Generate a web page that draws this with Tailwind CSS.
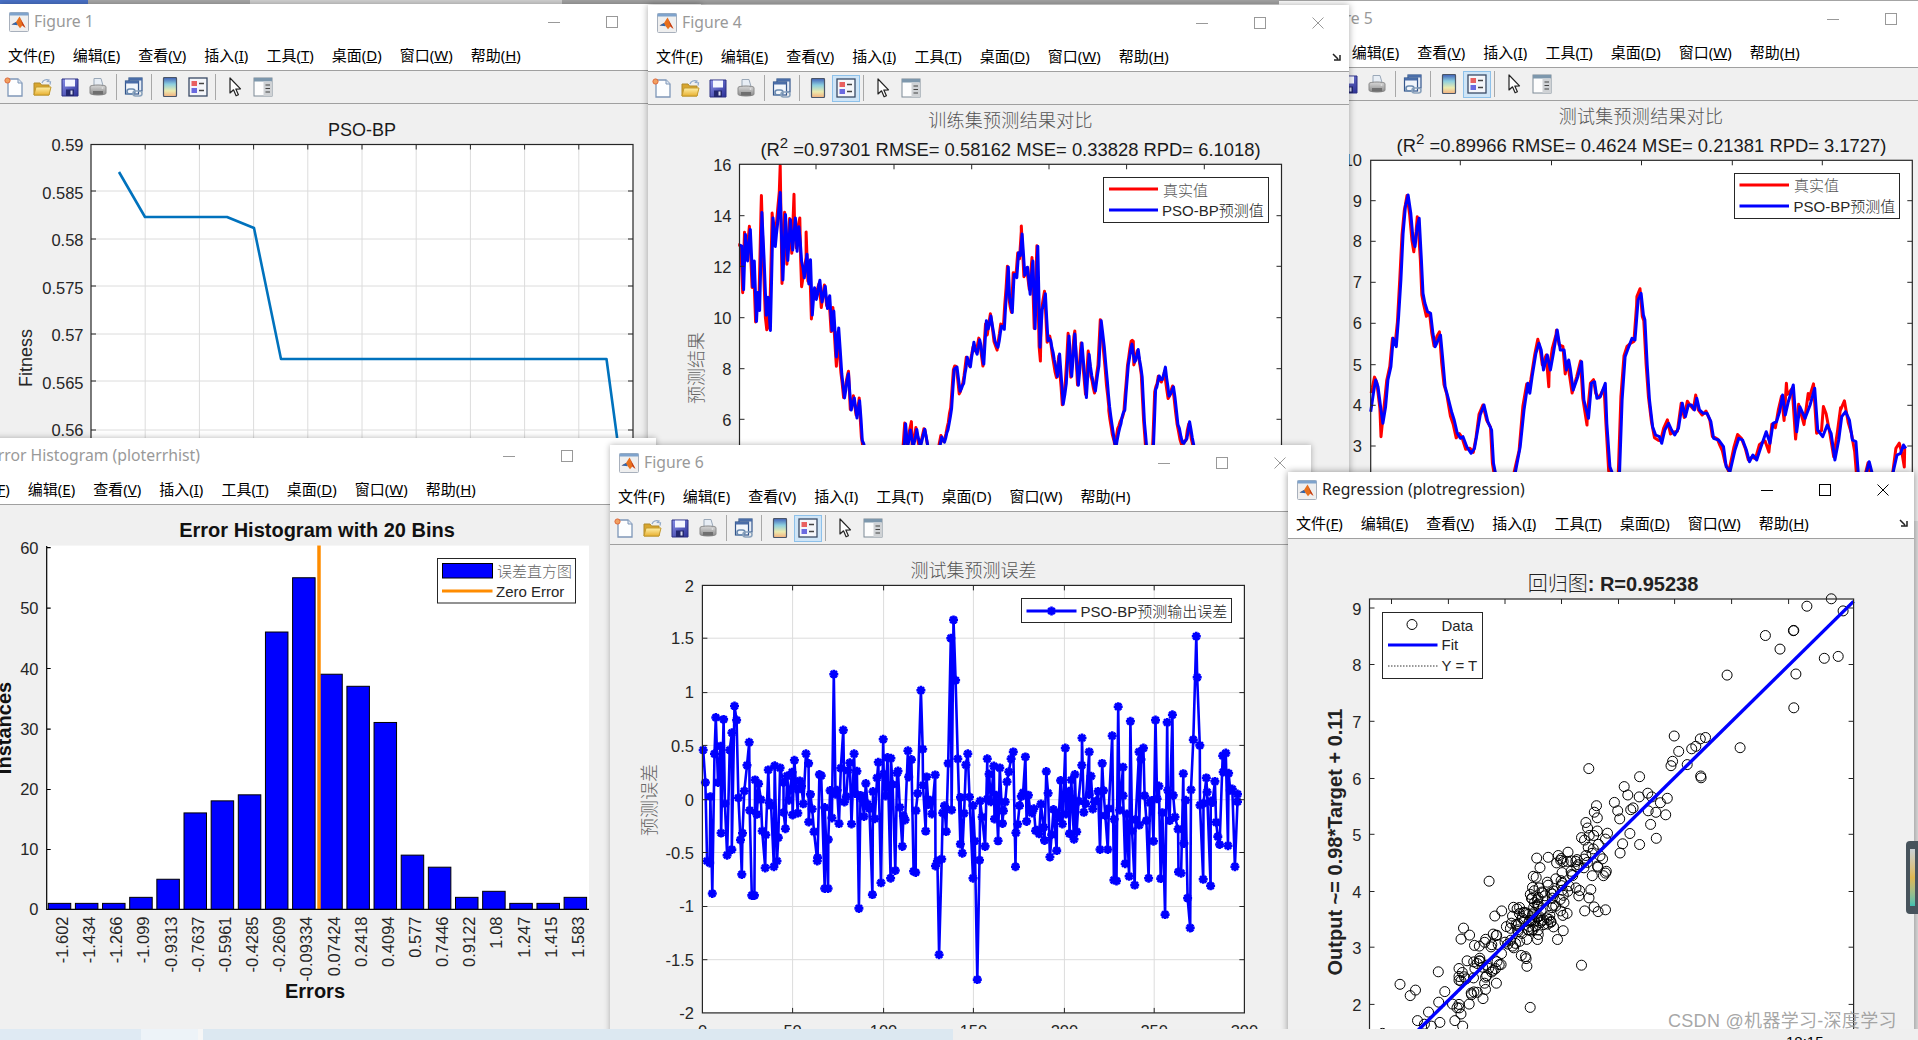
<!DOCTYPE html>
<html lang="zh">
<head>
<meta charset="utf-8">
<title>MATLAB figures</title>
<script src="https://cdn.jsdelivr.net/npm/@tailwindcss/browser@4"></script>
</head>
<body class="relative w-[1918px] h-[1040px] overflow-hidden bg-[#dcdcdc] font-['Noto_Sans','Noto_Sans_CJK_SC',sans-serif]">

<svg class="absolute w-0 h-0" aria-hidden="true">
  <defs>
    <linearGradient id="cb" x1="0" y1="0" x2="0" y2="1"><stop offset="0" stop-color="#3f5fb5"/><stop offset=".35" stop-color="#8ccfe0"/><stop offset=".7" stop-color="#ecebae"/><stop offset="1" stop-color="#f2b080"/></linearGradient>
    <linearGradient id="fo" x1="0" y1="0" x2="0" y2="1"><stop offset="0" stop-color="#fff0a8"/><stop offset="1" stop-color="#e8b030"/></linearGradient>
    <linearGradient id="fl" x1="0" y1="0" x2="1" y2="1"><stop offset="0" stop-color="#8a90e8"/><stop offset="1" stop-color="#2a2f96"/></linearGradient>
    <linearGradient id="pr" x1="0" y1="0" x2="0" y2="1"><stop offset="0" stop-color="#d8d8d8"/><stop offset="1" stop-color="#8a8a8a"/></linearGradient>
  </defs>
  <symbol id="ml" viewBox="0 0 20 20"><rect x=".5" y=".5" width="19" height="19" rx="1" fill="#efefef" stroke="#a8b0bc"/><rect x=".5" y=".5" width="19" height="3" fill="#7fa3cc"/><path d="M2.5 12.5 7 10l3.5-5.5 2.5 5 3.5 6-3-2.2-2.5 3-2.8-3.8z" fill="#e8701c"/><path d="M2.5 12.5 7 10l1.6 3.3-1.8-.2z" fill="#2c66b0"/><path d="m10.5 4.500 6 11.500-3-2.200-1.300-5.300z" fill="#c43c16"/></symbol>
  <symbol id="new" viewBox="0 0 20 20"><path d="M4 2h10l4 4v13H4z" fill="#fdfeff" stroke="#7f97b8" stroke-width="1.300"/><path d="M14 2v4h4" fill="#dfe8f3" stroke="#7f97b8"/><circle cx="3.500" cy="3.500" r="2.600" fill="#f0a060" stroke="#e06a3c"/></symbol>
  <symbol id="open" viewBox="0 0 20 20"><path d="M2 6h6l1.500 2H17v10H2z" fill="#d9a62e" stroke="#b08a2a"/><path d="M2 18 4 10h15l-2 8z" fill="url(#fo)" stroke="#c49a2c"/><path d="M10 6c1-3 4-4 7-3l-1.500 1.500 3 .2-.5 3" fill="none" stroke="#8fa8c8" stroke-width="1.200"/></symbol>
  <symbol id="save" viewBox="0 0 20 20"><path d="M2 2h16v17H2z" fill="url(#fl)" stroke="#2c3183"/><rect x="5" y="2.500" width="10" height="7" fill="#f4f6ff"/><rect x="6" y="12.500" width="8" height="6.500" fill="#23276e"/><rect x="10.500" y="13.500" width="2" height="4" fill="#d8dcf0"/></symbol>
  <symbol id="print" viewBox="0 0 20 20"><path d="M6 1.500h7l2 7H6z" fill="#e8eef5" stroke="#9aa8b8"/><path d="M2 9.500c1-2 15-2 16 0v7c-2 2-14 2-16 0z" fill="url(#pr)" stroke="#8a8a8a"/><rect x="5" y="14" width="10" height="3.500" fill="#6f6f6f"/><circle cx="14.500" cy="11" r=".9" fill="#ddd"/></symbol>
  <symbol id="link" viewBox="0 0 20 20"><rect x="5" y="1" width="13" height="13" fill="#e5ecf5" stroke="#33568c" stroke-width="1.200"/><rect x="5" y="1" width="13" height="2.500" fill="#4a6da8"/><rect x="1.500" y="4" width="13" height="13" fill="#f2f6fb" stroke="#33568c" stroke-width="1.200"/><rect x="1.500" y="4" width="13" height="2.500" fill="#4a6da8"/><rect x="3" y="12" width="8" height="5" rx="2.500" fill="none" stroke="#6a8ab0" stroke-width="1.600"/><rect x="9" y="14" width="9" height="5" rx="2.500" fill="none" stroke="#8aa2bc" stroke-width="1.600"/></symbol>
  <symbol id="cbar" viewBox="0 0 20 20"><rect x="3.500" y=".5" width="13" height="19" rx="1" fill="url(#cb)" stroke="#4a5568" stroke-width="1.200"/></symbol>
  <symbol id="leg" viewBox="0 0 20 20"><rect x="1" y="1" width="18" height="18" fill="#f4f6fa" stroke="#3a4a66" stroke-width="1.300"/><rect x="3.500" y="4" width="5.500" height="5" fill="#e86060"/><rect x="3.500" y="11" width="5.500" height="5" fill="#6a6ae0"/><path d="M11 6.500h5M11 13.500h5" stroke="#444" stroke-width="1.300"/></symbol>
  <symbol id="cur" viewBox="0 0 20 20"><path d="M5 1v15l3.500-3.200 2.600 6 2.300-1-2.600-5.700 4.700-.3z" fill="#fff" stroke="#222" stroke-width="1.200" stroke-linejoin="round"/></symbol>
  <symbol id="pan" viewBox="0 0 20 20"><rect x="1" y="1" width="18" height="18" fill="#fdfdfd" stroke="#7d8a96"/><rect x="1" y="1" width="18" height="3.500" fill="#7d97ac"/><rect x="10.500" y="4.500" width="8.500" height="14.500" fill="#cfd2d5"/><path d="M12.500 8h4.500M12.500 11.500h4.500M12.500 15h4.500" stroke="#444" stroke-width="1.200"/></symbol>
</svg>

<!-- desktop strip at the top -->
<div class="absolute left-0 top-0 w-full h-[4px] flex">
  <div class="w-[88px] bg-[#4a72c8]"></div><div class="w-[162px] bg-[#a9a9a9]"></div><div class="w-[312px] bg-[#d2d2d2]"></div><div class="flex-1 bg-[#a4a4a4]"></div>
</div>

<!-- Figure 5 -->
<section class="absolute left-[1279px] top-[1px] w-[701px] h-[520px] z-[1] bg-[#f0f0f0] overflow-hidden">
  <header class="h-[36px] bg-white flex items-center pl-[9px] pr-[2px]"><svg class="w-5 h-5"><use href="#ml"/></svg><span class="ml-[5px] text-[15.75px] text-[#999999]">Figure 5</span><span class="flex-1"></span><span class="w-[58px] flex justify-center"><span class="w-3 h-px bg-[#999999]"></span></span><span class="w-[58px] flex justify-center"><span class="w-3 h-3 border border-[#999999]"></span></span><span class="w-[58px]"></span></header>
  <nav class="h-[31px] bg-white border-b border-[#a0a0a0] pl-[8px] flex items-center gap-[18px] text-[15px] text-black whitespace-nowrap"><span>文件(<span class="underline">F</span>)</span><span>编辑(<span class="underline">E</span>)</span><span>查看(<span class="underline">V</span>)</span><span>插入(<span class="underline">I</span>)</span><span>工具(<span class="underline">T</span>)</span><span>桌面(<span class="underline">D</span>)</span><span>窗口(<span class="underline">W</span>)</span><span>帮助(<span class="underline">H</span>)</span></nav>
  <div class="h-[33px] border-b border-[#a0a0a0] flex items-center"><span class="w-7 flex justify-center"><svg class="w-5 h-5"><use href="#new"/></svg></span><span class="w-7 flex justify-center"><svg class="w-5 h-5"><use href="#open"/></svg></span><span class="w-7 flex justify-center"><svg class="w-5 h-5"><use href="#save"/></svg></span><span class="w-7 flex justify-center"><svg class="w-5 h-5"><use href="#print"/></svg></span><span class="w-px h-[26px] bg-[#a8a8a8] ml-[4px] mr-[3px]"></span><span class="w-7 flex justify-center"><svg class="w-5 h-5"><use href="#link"/></svg></span><span class="w-px h-[26px] bg-[#a8a8a8] ml-[3px] mr-[4px]"></span><span class="w-7 flex justify-center"><svg class="w-5 h-5"><use href="#cbar"/></svg></span><span class="w-7 h-[27px] flex items-center justify-center bg-[#cfe5f7] border border-[#8ec1ea]"><svg class="w-5 h-5"><use href="#leg"/></svg></span><span class="w-px h-[26px] bg-[#a8a8a8] ml-[3px] mr-[5px]"></span><span class="w-7 flex justify-center"><svg class="w-5 h-5"><use href="#cur"/></svg></span><span class="w-7 flex justify-center"><svg class="w-5 h-5"><use href="#pan"/></svg></span></div>
  <svg class="block w-[701px] h-[420px] font-['Liberation_Sans','Noto_Sans_CJK_SC',sans-serif] fill-[#262626]" viewBox="1279 101 701 420" font-size="16.500">
    <g id="g5"></g>
    <text x="1641" y="123" font-size="18" font-weight="300" letter-spacing=".3" text-anchor="middle" class="fill-[#555555]">测试集预测结果对比</text>
    <text x="1641.500" y="152" font-size="18.400" text-anchor="middle" class="fill-[#1a1a1a]">(R<tspan font-size="15" dy="-8">2</tspan><tspan dy="8"> =0.89966 RMSE= 0.4624 MSE= 0.21381 RPD= 3.1727)</tspan></text>
    <g text-anchor="end"><text x="1362" y="166">10</text><text x="1362" y="207">9</text><text x="1362" y="247">8</text><text x="1362" y="288">7</text><text x="1362" y="329">6</text><text x="1362" y="371">5</text><text x="1362" y="411">4</text><text x="1362" y="452">3</text></g>
    <rect x="1734.500" y="173.500" width="165" height="45" fill="#fff" stroke="#262626"/>
    <path d="M1739.500 185h49.500" stroke="#f00" stroke-width="3"/><path d="M1739.500 206h49.500" stroke="#00f" stroke-width="3"/>
    <text x="1794" y="191" font-size="15" font-weight="300" class="fill-[#555555]">真实值</text><text x="1793.500" y="212" font-size="15">PSO-BP<tspan font-weight="300">预测值</tspan></text>
  </svg>
</section>

<!-- Figure 1 -->
<section class="absolute left-0 top-[4px] w-[701px] h-[560px] z-[2] bg-[#f0f0f0] overflow-hidden shadow-[0_0_6px_rgba(0,0,0,0.3)]">
  <header class="h-[36px] bg-white flex items-center pl-[9px] pr-[2px]"><svg class="w-5 h-5"><use href="#ml"/></svg><span class="ml-[5px] text-[15.75px] text-[#999999]">Figure 1</span><span class="flex-1"></span><span class="w-[58px] flex justify-center"><span class="w-3 h-px bg-[#999999]"></span></span><span class="w-[58px] flex justify-center"><span class="w-3 h-3 border border-[#999999]"></span></span><span class="w-[58px]"></span></header>
  <nav class="h-[31px] bg-white border-b border-[#a0a0a0] pl-[8px] flex items-center gap-[18px] text-[15px] text-black whitespace-nowrap"><span>文件(<span class="underline">F</span>)</span><span>编辑(<span class="underline">E</span>)</span><span>查看(<span class="underline">V</span>)</span><span>插入(<span class="underline">I</span>)</span><span>工具(<span class="underline">T</span>)</span><span>桌面(<span class="underline">D</span>)</span><span>窗口(<span class="underline">W</span>)</span><span>帮助(<span class="underline">H</span>)</span></nav>
  <div class="h-[33px] border-b border-[#a0a0a0] flex items-center"><span class="w-7 flex justify-center"><svg class="w-5 h-5"><use href="#new"/></svg></span><span class="w-7 flex justify-center"><svg class="w-5 h-5"><use href="#open"/></svg></span><span class="w-7 flex justify-center"><svg class="w-5 h-5"><use href="#save"/></svg></span><span class="w-7 flex justify-center"><svg class="w-5 h-5"><use href="#print"/></svg></span><span class="w-px h-[26px] bg-[#a8a8a8] ml-[4px] mr-[3px]"></span><span class="w-7 flex justify-center"><svg class="w-5 h-5"><use href="#link"/></svg></span><span class="w-px h-[26px] bg-[#a8a8a8] ml-[3px] mr-[4px]"></span><span class="w-7 flex justify-center"><svg class="w-5 h-5"><use href="#cbar"/></svg></span><span class="w-7 flex justify-center"><svg class="w-5 h-5"><use href="#leg"/></svg></span><span class="w-px h-[26px] bg-[#a8a8a8] ml-[3px] mr-[5px]"></span><span class="w-7 flex justify-center"><svg class="w-5 h-5"><use href="#cur"/></svg></span><span class="w-7 flex justify-center"><svg class="w-5 h-5"><use href="#pan"/></svg></span></div>
  <svg class="block w-[701px] h-[460px] font-['Liberation_Sans','Noto_Sans_CJK_SC',sans-serif] fill-[#262626]" viewBox="0 104 701 460" font-size="16.500">
    <g id="g1"></g>
    <text x="362" y="136" font-size="18" text-anchor="middle" class="fill-[#1a1a1a]">PSO-BP</text>
    <g text-anchor="end"><text x="83.500" y="151">0.59</text><text x="83.500" y="199">0.585</text><text x="83.500" y="246">0.58</text><text x="83.500" y="294">0.575</text><text x="83.500" y="341">0.57</text><text x="83.500" y="389">0.565</text><text x="83.500" y="436">0.56</text></g>
    <text transform="translate(32,358) rotate(-90)" font-size="18" text-anchor="middle">Fitness</text>
  </svg>
</section>

<!-- Figure 4 -->
<section class="absolute left-[648px] top-[5px] w-[701px] h-[480px] z-[3] bg-[#f0f0f0] overflow-hidden shadow-[0_0_7px_rgba(0,0,0,0.35)]">
  <header class="h-[36px] bg-white flex items-center pl-[9px] pr-[2px]"><svg class="w-5 h-5"><use href="#ml"/></svg><span class="ml-[5px] text-[15.75px] text-[#999999]">Figure 4</span><span class="flex-1"></span><span class="w-[58px] flex justify-center"><span class="w-3 h-px bg-[#999999]"></span></span><span class="w-[58px] flex justify-center"><span class="w-3 h-3 border border-[#999999]"></span></span><span class="w-[58px] flex justify-center"><svg class="w-3 h-3" viewBox="0 0 12 12"><path d="M.5.5l11 11M11.500.5l-11 11" stroke="#999999" fill="none"/></svg></span></header>
  <nav class="relative h-[31px] bg-white border-b border-[#a0a0a0] pl-[8px] flex items-center gap-[18px] text-[15px] text-black whitespace-nowrap"><span>文件(<span class="underline">F</span>)</span><span>编辑(<span class="underline">E</span>)</span><span>查看(<span class="underline">V</span>)</span><span>插入(<span class="underline">I</span>)</span><span>工具(<span class="underline">T</span>)</span><span>桌面(<span class="underline">D</span>)</span><span>窗口(<span class="underline">W</span>)</span><span>帮助(<span class="underline">H</span>)</span><svg class="absolute right-[8px] top-[12px] w-[9px] h-[8px]" viewBox="0 0 9 8"><path d="M1 1l5 5M2 7h6V2" stroke="#222" stroke-width="1.500" fill="none"/></svg></nav>
  <div class="h-[33px] border-b border-[#a0a0a0] flex items-center"><span class="w-7 flex justify-center"><svg class="w-5 h-5"><use href="#new"/></svg></span><span class="w-7 flex justify-center"><svg class="w-5 h-5"><use href="#open"/></svg></span><span class="w-7 flex justify-center"><svg class="w-5 h-5"><use href="#save"/></svg></span><span class="w-7 flex justify-center"><svg class="w-5 h-5"><use href="#print"/></svg></span><span class="w-px h-[26px] bg-[#a8a8a8] ml-[4px] mr-[3px]"></span><span class="w-7 flex justify-center"><svg class="w-5 h-5"><use href="#link"/></svg></span><span class="w-px h-[26px] bg-[#a8a8a8] ml-[3px] mr-[4px]"></span><span class="w-7 flex justify-center"><svg class="w-5 h-5"><use href="#cbar"/></svg></span><span class="w-7 h-[27px] flex items-center justify-center bg-[#cfe5f7] border border-[#8ec1ea]"><svg class="w-5 h-5"><use href="#leg"/></svg></span><span class="w-px h-[26px] bg-[#a8a8a8] ml-[3px] mr-[5px]"></span><span class="w-7 flex justify-center"><svg class="w-5 h-5"><use href="#cur"/></svg></span><span class="w-7 flex justify-center"><svg class="w-5 h-5"><use href="#pan"/></svg></span></div>
  <svg class="block w-[701px] h-[380px] font-['Liberation_Sans','Noto_Sans_CJK_SC',sans-serif] fill-[#262626]" viewBox="648 105 701 380" font-size="16.500">
    <g id="g4"></g>
    <text x="1010.500" y="127" font-size="18" font-weight="300" letter-spacing=".3" text-anchor="middle" class="fill-[#555555]">训练集预测结果对比</text>
    <text x="1010.500" y="156" font-size="18.400" text-anchor="middle" class="fill-[#1a1a1a]">(R<tspan font-size="15" dy="-8">2</tspan><tspan dy="8"> =0.97301 RMSE= 0.58162 MSE= 0.33828 RPD= 6.1018)</tspan></text>
    <g text-anchor="end"><text x="731.500" y="171">16</text><text x="731.500" y="222">14</text><text x="731.500" y="273">12</text><text x="731.500" y="324">10</text><text x="731.500" y="375">8</text><text x="731.500" y="426">6</text></g>
    <text transform="translate(703,368) rotate(-90)" font-size="18" font-weight="300" text-anchor="middle" class="fill-[#666666]">预测结果</text>
    <rect x="1103.500" y="177.500" width="165" height="45" fill="#fff" stroke="#262626"/>
    <path d="M1109 189h49" stroke="#f00" stroke-width="3"/><path d="M1109 210h49" stroke="#00f" stroke-width="3"/>
    <text x="1163" y="196" font-size="15" font-weight="300" class="fill-[#555555]">真实值</text><text x="1162" y="216" font-size="15">PSO-BP<tspan font-weight="300">预测值</tspan></text>
  </svg>
</section>

<!-- Error Histogram -->
<section class="absolute left-[-45px] top-[438px] w-[701px] h-[602px] z-[4] bg-[#f0f0f0] overflow-hidden shadow-[0_0_6px_rgba(0,0,0,0.3)]">
  <header class="h-[36px] bg-white flex items-center pl-[9px] pr-[2px]"><svg class="w-5 h-5"><use href="#ml"/></svg><span class="ml-[5px] text-[15.75px] text-[#999999]">Error Histogram (ploterrhist)</span><span class="flex-1"></span><span class="w-[58px] flex justify-center"><span class="w-3 h-px bg-[#999999]"></span></span><span class="w-[58px] flex justify-center"><span class="w-3 h-3 border border-[#999999]"></span></span><span class="w-[58px]"></span></header>
  <nav class="h-[31px] bg-white border-b border-[#a0a0a0] pl-[8px] flex items-center gap-[18px] text-[15px] text-black whitespace-nowrap"><span>文件(<span class="underline">F</span>)</span><span>编辑(<span class="underline">E</span>)</span><span>查看(<span class="underline">V</span>)</span><span>插入(<span class="underline">I</span>)</span><span>工具(<span class="underline">T</span>)</span><span>桌面(<span class="underline">D</span>)</span><span>窗口(<span class="underline">W</span>)</span><span>帮助(<span class="underline">H</span>)</span></nav>
  <svg class="block w-[701px] h-[535px] font-['Liberation_Sans','Noto_Sans_CJK_SC',sans-serif] fill-[#262626]" viewBox="-45 505 701 535" font-size="16.500">
    <g id="gh"></g>
    <text x="317" y="537" font-size="20" font-weight="700" text-anchor="middle" class="fill-[#111111]">Error Histogram with 20 Bins</text>
    <g text-anchor="end"><text x="38.500" y="915">0</text><text x="38.500" y="855">10</text><text x="38.500" y="795">20</text><text x="38.500" y="735">30</text><text x="38.500" y="675">40</text><text x="38.500" y="614">50</text><text x="38.500" y="554">60</text></g>
    <g text-anchor="end">
      <text transform="translate(68,916.500) rotate(-90)">-1.602</text><text transform="translate(95.150,916.500) rotate(-90)">-1.434</text><text transform="translate(122.300,916.500) rotate(-90)">-1.266</text><text transform="translate(149.450,916.500) rotate(-90)">-1.099</text><text transform="translate(176.600,916.500) rotate(-90)">-0.9313</text><text transform="translate(203.750,916.500) rotate(-90)">-0.7637</text><text transform="translate(230.900,916.500) rotate(-90)">-0.5961</text><text transform="translate(258.050,916.500) rotate(-90)">-0.4285</text><text transform="translate(285.200,916.500) rotate(-90)">-0.2609</text><text transform="translate(312.350,916.500) rotate(-90)">-0.09334</text><text transform="translate(339.500,916.500) rotate(-90)">0.07424</text><text transform="translate(366.650,916.500) rotate(-90)">0.2418</text><text transform="translate(393.800,916.500) rotate(-90)">0.4094</text><text transform="translate(420.950,916.500) rotate(-90)">0.577</text><text transform="translate(448.100,916.500) rotate(-90)">0.7446</text><text transform="translate(475.250,916.500) rotate(-90)">0.9122</text><text transform="translate(502.400,916.500) rotate(-90)">1.08</text><text transform="translate(529.550,916.500) rotate(-90)">1.247</text><text transform="translate(556.700,916.500) rotate(-90)">1.415</text><text transform="translate(583.850,916.500) rotate(-90)">1.583</text>
    </g>
    <text x="315" y="998" font-size="20" font-weight="700" text-anchor="middle" class="fill-[#111111]">Errors</text>
    <text transform="translate(10.500,728) rotate(-90)" font-size="20" font-weight="700" text-anchor="middle" class="fill-[#111111]">Instances</text>
    <rect x="437.500" y="558.500" width="138" height="44.500" fill="#fff" stroke="#262626"/>
    <rect x="442.500" y="563.500" width="50" height="14.500" fill="#00f" stroke="#000"/>
    <path d="M442 591h50.500" stroke="#ff8c00" stroke-width="3"/>
    <text x="497" y="577" font-size="15" font-weight="300" class="fill-[#666666]">误差直方图</text><text x="496" y="597" font-size="15">Zero Error</text>
  </svg>
</section>

<!-- Figure 6 -->
<section class="absolute left-[610px] top-[445px] w-[701px] h-[595px] z-[5] bg-[#f0f0f0] overflow-hidden shadow-[0_0_6px_rgba(0,0,0,0.3)]">
  <header class="h-[36px] bg-white flex items-center pl-[9px] pr-[2px]"><svg class="w-5 h-5"><use href="#ml"/></svg><span class="ml-[5px] text-[15.75px] text-[#999999]">Figure 6</span><span class="flex-1"></span><span class="w-[58px] flex justify-center"><span class="w-3 h-px bg-[#999999]"></span></span><span class="w-[58px] flex justify-center"><span class="w-3 h-3 border border-[#999999]"></span></span><span class="w-[58px] flex justify-center"><svg class="w-3 h-3" viewBox="0 0 12 12"><path d="M.5.5l11 11M11.500.5l-11 11" stroke="#999999" fill="none"/></svg></span></header>
  <nav class="h-[31px] bg-white border-b border-[#a0a0a0] pl-[8px] flex items-center gap-[18px] text-[15px] text-black whitespace-nowrap"><span>文件(F)</span><span>编辑(E)</span><span>查看(V)</span><span>插入(I)</span><span>工具(T)</span><span>桌面(D)</span><span>窗口(W)</span><span>帮助(H)</span></nav>
  <div class="h-[33px] border-b border-[#a0a0a0] flex items-center"><span class="w-7 flex justify-center"><svg class="w-5 h-5"><use href="#new"/></svg></span><span class="w-7 flex justify-center"><svg class="w-5 h-5"><use href="#open"/></svg></span><span class="w-7 flex justify-center"><svg class="w-5 h-5"><use href="#save"/></svg></span><span class="w-7 flex justify-center"><svg class="w-5 h-5"><use href="#print"/></svg></span><span class="w-px h-[26px] bg-[#a8a8a8] ml-[4px] mr-[3px]"></span><span class="w-7 flex justify-center"><svg class="w-5 h-5"><use href="#link"/></svg></span><span class="w-px h-[26px] bg-[#a8a8a8] ml-[3px] mr-[4px]"></span><span class="w-7 flex justify-center"><svg class="w-5 h-5"><use href="#cbar"/></svg></span><span class="w-7 h-[27px] flex items-center justify-center bg-[#cfe5f7] border border-[#8ec1ea]"><svg class="w-5 h-5"><use href="#leg"/></svg></span><span class="w-px h-[26px] bg-[#a8a8a8] ml-[3px] mr-[5px]"></span><span class="w-7 flex justify-center"><svg class="w-5 h-5"><use href="#cur"/></svg></span><span class="w-7 flex justify-center"><svg class="w-5 h-5"><use href="#pan"/></svg></span></div>
  <svg class="block w-[701px] h-[495px] font-['Liberation_Sans','Noto_Sans_CJK_SC',sans-serif] fill-[#262626]" viewBox="610 545 701 495" font-size="16.500">
    <g id="g6"></g>
    <text x="973.500" y="577" font-size="18" font-weight="300" text-anchor="middle" class="fill-[#555555]">测试集预测误差</text>
    <g text-anchor="end"><text x="694" y="592">2</text><text x="694" y="644">1.5</text><text x="694" y="698">1</text><text x="694" y="752">0.5</text><text x="694" y="806">0</text><text x="694" y="859">-0.5</text><text x="694" y="912">-1</text><text x="694" y="966">-1.5</text><text x="694" y="1019">-2</text></g>
    <g text-anchor="middle"><text x="702.500" y="1037">0</text><text x="792.600" y="1037">50</text><text x="883.500" y="1037">100</text><text x="973.400" y="1037">150</text><text x="1064.400" y="1037">200</text><text x="1154.200" y="1037">250</text><text x="1244.400" y="1037">300</text></g>
    <text transform="translate(656,800) rotate(-90)" font-size="18" font-weight="300" text-anchor="middle" class="fill-[#666666]">预测误差</text>
    <rect x="1021.500" y="598.500" width="210" height="24" fill="#fff" stroke="#262626"/>
    <path d="M1026.500 611h50" stroke="#00f" stroke-width="3"/><path d="M1051.500 606.500v9M1047 611h9M1048.300 607.800l6.400 6.400M1054.700 607.800l-6.400 6.400" stroke="#00f" stroke-width="2.600"/>
    <text x="1080.500" y="617" font-size="15">PSO-BP<tspan font-weight="300">预测输出误差</tspan></text>
  </svg>
</section>

<!-- Regression -->
<section class="absolute left-[1288px] top-[472px] w-[626px] h-[568px] z-[6] bg-[#f0f0f0] overflow-hidden shadow-[0_0_7px_rgba(0,0,0,0.4)]">
  <header class="h-[36px] bg-white flex items-center pl-[9px] pr-[2px]"><svg class="w-5 h-5"><use href="#ml"/></svg><span class="ml-[5px] text-[15.75px] text-[#222222]">Regression (plotregression)</span><span class="flex-1"></span><span class="w-[58px] flex justify-center"><span class="w-3 h-px bg-black"></span></span><span class="w-[58px] flex justify-center"><span class="w-3 h-3 border border-black"></span></span><span class="w-[58px] flex justify-center"><svg class="w-3 h-3" viewBox="0 0 12 12"><path d="M.5.5l11 11M11.500.5l-11 11" stroke="#000" fill="none"/></svg></span></header>
  <nav class="relative h-[31px] bg-white border-b border-[#a0a0a0] pl-[8px] flex items-center gap-[18px] text-[15px] text-black whitespace-nowrap"><span>文件(<span class="underline">F</span>)</span><span>编辑(<span class="underline">E</span>)</span><span>查看(<span class="underline">V</span>)</span><span>插入(<span class="underline">I</span>)</span><span>工具(<span class="underline">T</span>)</span><span>桌面(<span class="underline">D</span>)</span><span>窗口(<span class="underline">W</span>)</span><span>帮助(<span class="underline">H</span>)</span><svg class="absolute right-[6px] top-[11px] w-[9px] h-[8px]" viewBox="0 0 9 8"><path d="M1 1l5 5M2 7h6V2" stroke="#222" stroke-width="1.500" fill="none"/></svg></nav>
  <svg class="block w-[626px] h-[501px] font-['Liberation_Sans','Noto_Sans_CJK_SC',sans-serif] fill-[#262626]" viewBox="1288 539 626 501" font-size="16.500">
    <g id="gr"></g>
    <text x="1613" y="591" font-size="20" text-anchor="middle" class="fill-[#222222]"><tspan font-weight="300">回归图</tspan><tspan font-weight="700">: R=0.95238</tspan></text>
    <g text-anchor="end"><text x="1361.500" y="615">9</text><text x="1361.500" y="671">8</text><text x="1361.500" y="728">7</text><text x="1361.500" y="785">6</text><text x="1361.500" y="841">5</text><text x="1361.500" y="898">4</text><text x="1361.500" y="954">3</text><text x="1361.500" y="1011">2</text></g>
    <text transform="translate(1342,842) rotate(-90)" font-size="20" font-weight="700" text-anchor="middle" class="fill-[#222222]">Output ~= 0.98*Target + 0.11</text>
    <rect x="1382.500" y="612.500" width="100" height="66" fill="#fff" stroke="#262626"/>
    <circle cx="1412" cy="624.500" r="5" fill="none" stroke="#000"/>
    <path d="M1388 645h49.500" stroke="#00f" stroke-width="3"/><path d="M1388 666h49.500" stroke="#333" stroke-dasharray="1.500 1.500"/>
    <text x="1441.500" y="631" font-size="15">Data</text><text x="1441.500" y="650" font-size="15">Fit</text><text x="1441.500" y="671" font-size="15">Y = T</text>
  </svg>
</section>

<!-- bottom desktop strip, overlays -->
<div class="absolute left-0 bottom-0 w-full h-[11px] z-[7] flex">
  <div class="w-[141px] bg-[#dfeaf3]"></div><div class="w-[57px] bg-[#edf3f8]"></div><div class="w-[5px] bg-[#f6f6f6]"></div><div class="w-[750px] bg-[#dce8f1]"></div><div class="flex-1 bg-[#efefef]"></div>
</div>
<div class="absolute left-[1786px] top-[1032px] z-[8] text-[15px] leading-[20px] text-black font-['Liberation_Sans',sans-serif]">18:15</div>
<div class="absolute left-[1668px] top-[1008px] z-[8] text-[18px] tracking-[0.3px] leading-[26px] text-[#8f8f8f]/80 whitespace-nowrap font-['Liberation_Sans','Noto_Sans_CJK_SC',sans-serif]">CSDN @机器学习-深度学习</div>
<div class="absolute right-0 top-[841px] w-[12px] h-[73px] z-[8] bg-[#47535c] rounded-l-[4px] flex justify-center pt-[8px] pb-[8px]"><div class="w-[5px] bg-linear-to-b from-[#c9d0d6] via-[#e0b850] to-[#3cc0b0]"></div></div>

<script>
function rng(s){return function(){s=(s*16807)%2147483647;return s/2147483647;};}
var NS='http://www.w3.org/2000/svg';
function add(g,tag,attrs){var e=document.createElementNS(NS,tag);for(var k in attrs)e.setAttribute(k,attrs[k]);document.getElementById(g).appendChild(e);return e;}
function frame(g,x0,x1,y0,y1,xs,ys,bottomTicks){
  var d='';
  xs.forEach(function(x){d+='M'+x+' '+y0+'v5';if(bottomTicks)d+='M'+x+' '+y1+'v-5';});
  ys.forEach(function(y){d+='M'+x0+' '+y+'h5M'+x1+' '+y+'h-5';});
  add(g,'path',{d:d,stroke:'#262626','stroke-width':1,fill:'none'});
  add(g,'rect',{x:x0,y:y0,width:x1-x0,height:y1-y0,fill:'none',stroke:'#262626','stroke-width':1.2});
}
function bg(g,x0,x1,y0,y1){add(g,'rect',{x:x0,y:y0,width:x1-x0,height:y1-y0,fill:'#fff'});}
function gridPath(x0,x1,y0,y1,xs,ys){var d='';xs.forEach(function(x){d+='M'+x+' '+y0+'V'+y1;});ys.forEach(function(y){d+='M'+x0+' '+y+'H'+x1;});return d;}
function interp(a,step,noise,r){
  var o=[];
  for(var i=0;i<a.length-1;i++){
    var dx=a[i+1][0]-a[i][0],n=Math.max(1,Math.round(dx/step));
    for(var j=0;j<n;j++){var t=j/n;o.push([a[i][0]+dx*t,a[i][1]+(a[i+1][1]-a[i][1])*t+(r()-.5)*noise]);}
  }
  o.push(a[a.length-1]);return o;
}
function pts(a){return a.map(function(p){return p[0].toFixed(1)+','+p[1].toFixed(1);}).join(' ');}
function line(g,a,c,w){add(g,'polyline',{points:pts(a),fill:'none',stroke:c,'stroke-width':w,'stroke-linejoin':'round'});}

/* Figure 1 */
(function(){
  var xs=[],ys=[191,239,286,334,381,430];
  for(var i=1;i<=9;i++)xs.push(+(91+54.2*i).toFixed(1));
  bg('g1',91,633,144.5,600);
  add('g1','path',{d:gridPath(91,633,144.5,600,xs,ys),stroke:'#dcdcdc',fill:'none'});
  line('g1',[[119,172],[145,217],[227,217],[254,228],[281,359],[606.500,359],[617,437],[622,500]],'#0072bd',2.600);
  frame('g1',91,633,144.5,600,xs,ys);
})();

/* Figure 4 */
(function(){
  var z=[[222,740],[228,740],[232,870],[236,705],[241,780],[247,688],[253,860],[256,785],[261,960],[264,880],[268,930],[273,640],[278,780],[283,950],[287,890],[292,990],[298,650],[303,740],[308,670],[314,580],[320,840],[326,640],[331,780],[337,660],[342,750],[348,650],[352,750],[356,680],[362,780],[368,830],[374,765],[378,850],[382,780],[386,945],[391,860],[395,900],[403,840],[408,910],[415,855],[420,930],[425,885],[430,990],[434,930],[440,1070],[445,985],[452,1120],[458,1190],[467,1120],[473,1230],[480,1190],[486,1250],[492,1200],[498,1320],[504,1345],[520,1500],[580,1500],[592,1340],[595,1272],[600,1340],[606,1290],[612,1340],[620,1290],[628,1340],[638,1290],[645,1340],[655,1400],[668,1400],[672,1340],[676,1310],[682,1330],[690,1290],[698,1230],[704,1105],[710,1105],[717,1175],[725,1150],[733,1075],[740,1100],[748,1030],[755,1065],[761,1015],[770,1095],[776,960],[780,990],[786,950],[795,1020],[802,1045],[810,980],[816,985],[825,800],[828,890],[834,940],[838,820],[844,830],[848,760],[852,770],[856,700],[862,830],[868,800],[874,880],[880,780],[885,990],[891,735],[896,1040],[901,930],[908,885],[914,1020],[920,1020],[928,1080],[935,1130],[940,1060],[948,1210],[955,1150],[961,1010],[967,1130],[974,1000],[982,1160],[990,1030],[1000,1190],[1006,1060],[1012,1130],[1020,1170],[1028,1100],[1033,960],[1040,1040],[1047,1150],[1052,1220],[1060,1300],[1066,1345],[1072,1300],[1080,1250],[1086,1230],[1094,1090],[1102,1030],[1108,1090],[1116,1050],[1125,1130],[1130,1270],[1135,1345],[1150,1345],[1155,1170],[1163,1130],[1170,1140],[1177,1105],[1185,1190],[1195,1160],[1205,1270],[1215,1330],[1225,1320],[1231,1265],[1240,1335],[1250,1500]];
  var spikes=[[230,880],[259,965],[272,583],[284,985],[296,640],[314,498],[345,583],[358,650],[362,860],[372,695],[440,1100],[467,1112],[491,1195],[608,1265],[638,1290],[785,940],[854,680],[897,1085],[974,995],[1050,1230],[1105,1025]];
  var m=function(p){return [640+p[0]/2.24,p[1]/3];};
  var xs=[816,894,971.7,1049,1126.6,1204.3],ys=[215.7,266.3,317.7,368.7,419.3];
  bg('g4',739.5,1281.5,164.3,600);
  var r=rng(12345);
  var redA=z.map(function(p){return [p[0]-2,p[1]+(r()-.5)*22];}).concat(spikes).sort(function(a,b){return a[0]-b[0];});
  line('g4',interp(redA.map(m),1.4,3,r),'#f00',3);
  line('g4',interp(z.map(m),1.4,3,r),'#00f',3);
  frame('g4',739.5,1281.5,164.3,600,xs,ys);
})();

/* Figure 5 */
(function(){
  var z=[[133,1235],[140,1180],[146,1140],[152,1160],[160,1230],[165,1270],[172,1220],[178,1140],[186,1100],[192,1015],[200,1040],[206,950],[212,840],[218,700],[224,620],[231,585],[238,640],[244,720],[249,740],[255,680],[260,655],[266,780],[270,880],[275,910],[282,935],[290,940],[296,1000],[302,1040],[310,1020],[316,1005],[322,1080],[328,1160],[335,1190],[345,1235],[352,1260],[360,1300],[368,1315],[375,1310],[385,1340],[396,1360],[405,1345],[412,1300],[420,1245],[430,1215],[440,1265],[450,1290],[455,1390],[462,1430],[510,1430],[525,1340],[535,1230],[545,1150],[550,1180],[556,1130],[566,1060],[574,1030],[580,1050],[586,1110],[596,1065],[604,1110],[612,1060],[622,990],[630,1050],[640,1050],[646,1110],[652,1080],[656,1105],[664,1170],[676,1130],[686,1085],[692,1200],[704,1255],[712,1150],[720,1145],[726,1195],[735,1190],[748,1150],[752,1270],[760,1400],[770,1430],[785,1430],[792,1200],[800,1070],[808,1045],[818,1015],[826,1020],[834,900],[842,880],[848,945],[852,960],[858,1095],[864,1200],[872,1280],[880,1305],[890,1310],[896,1330],[904,1290],[914,1270],[922,1290],[930,1305],[940,1285],[950,1210],[958,1250],[966,1215],[974,1215],[982,1230],[988,1195],[995,1230],[1005,1240],[1015,1240],[1025,1265],[1032,1315],[1045,1320],[1058,1340],[1065,1400],[1075,1415],[1088,1350],[1098,1315],[1108,1320],[1118,1350],[1126,1385],[1135,1365],[1145,1380],[1155,1345],[1170,1295],[1180,1330],[1188,1270],[1197,1265],[1205,1235],[1213,1185],[1220,1245],[1228,1205],[1241,1155],[1250,1295],[1258,1220],[1272,1255],[1285,1215],[1297,1165],[1305,1290],[1318,1310],[1330,1275],[1340,1300],[1350,1380],[1360,1320],[1368,1250],[1378,1235],[1388,1260],[1396,1320],[1405,1325],[1412,1430],[1430,1430],[1440,1385],[1450,1430],[1500,1430],[1513,1365],[1522,1360],[1530,1335],[1536,1345]];
  var spikes=[[160,1310],[190,1015],[224,615],[255,650],[600,1160],[620,990],[700,1275],[830,915],[1223,1150],[1280,1180],[1320,1220],[1365,1230],[1532,1400]];
  var m=function(p){return [1320+p[0]/2.622,p[1]/3];};
  var xs=[1460.3,1551.5,1641.5,1732.3,1822.3],ys=[200.7,241.3,282.3,323.3,364.7,405.3,446];
  bg('g5',1370.7,1912.3,160.3,600);
  var r=rng(777);
  var redA=z.slice(1).map(function(p){return [p[0]-3,p[1]+(r()-.5)*(p[0]>1150?70:32)];}).concat(spikes).sort(function(a,b){return a[0]-b[0];});
  redA.unshift([134,1180]);
  line('g5',interp(redA.map(m),3,.6,r),'#f00',3);
  line('g5',z.map(m),'#00f',3);
  frame('g5',1370.7,1912.3,160.3,600,xs,ys);
})();

/* Histogram */
(function(){
  bg('gh',46.7,589,545.6,909.4);
  var v=[1,1,1,2,5,16,18,19,46,55,39,37,31,9,7,2,3,1,1,2];
  v.forEach(function(n,i){var c=59.5+27.15*i,h=n*6.03;add('gh','rect',{x:c-11.25,y:909.4-h,width:22.5,height:h,fill:'#00f',stroke:'#000','stroke-width':1});});
  add('gh','path',{d:'M319 545.6V909',stroke:'#ff8c00','stroke-width':3.5});
  add('gh','path',{d:'M46.7 546V909.4H589M46.7 547.7h4M46.7 608.2h4M46.7 668.5h4M46.7 729.2h4M46.7 789.5h4M46.7 849.5h4',stroke:'#000','stroke-width':1.2,fill:'none'});
})();

/* Figure 6 */
(function(){
  var xs=[792.6,883.6,973.4,1064.4,1154.2],ys=[638.2,692.6,745.4,799.7,852.5,906.5,959.7];
  bg('g6',702.4,1244.4,585.4,1012.9);
  add('g6','path',{d:gridPath(702.4,1244.4,585.4,1012.9,xs,ys),stroke:'#dcdcdc',fill:'none'});
  var a=[[215,810],[220,895],[224,1100],[230,1105],[236,1185],[241,820],[244,725],[249,895],[255,800],[262,730],[265,950],[270,1085],[276,810],[281,765],[287,695],[292,732],[296,935],[301,1045],[304,1135],[316,850],[321,790],[327,1190],[333,1190],[348,940],[358,1118],[365,862],[378,1115],[385,1100],[400,895],[420,868],[433,975],[452,820],[458,845],[478,1100],[495,1172],[503,1172],[516,612],[538,758],[563,820],[574,1224],[605,1188],[616,883],[625,1157],[630,782],[640,830],[647,1145],[658,1125],[662,870],[674,1062],[687,812],[695,835],[700,1127],[705,1130],[717,654],[721,808],[728,1022],[750,875],[755,1100],[759,1345],[765,1095],[780,845],[786,518],[792,470],[797,628],[802,833],[808,1056],[825,820],[837,1145],[847,1410],[852,1098],[858,985],[865,1062],[870,833],[885,852],[905,1002],[925,833],[930,815],[935,1115],[958,828],[1000,1012],[1030,1073],[1050,805],[1058,918],[1070,1043],[1088,850],[1105,815],[1130,1070],[1135,845],[1148,1070],[1158,773],[1162,1150],[1168,1152],[1172,697],[1183,855],[1188,1107],[1197,1140],[1200,735],[1210,1163],[1220,815],[1230,805],[1242,1145],[1258,732],[1270,1146],[1280,1240],[1285,738],[1297,718],[1310,1017],[1317,1132],[1322,872],[1332,1197],[1338,1275],[1345,783],[1352,513],[1354,620],[1360,798],[1368,1148],[1375,883],[1385,1165],[1395,892],[1413,825],[1420,818],[1425,1060],[1435,912],[1441,1115],[1447,945]];
  var r=rng(4242),p=[],k=0,N=300;
  for(var i=0;i<N;i++){
    var zx=215+i*(1447-215)/(N-1);
    while(k<a.length&&a[k][0]<zx-4.2){
      p.push([a[k][0],a[k][1]]);k++;
    }
    if(k<a.length&&Math.abs(a[k][0]-zx)<=4.2){p.push([a[k][0],a[k][1]]);k++;}
    else{p.push([zx,950+((r()+r()+r())/3-.5)*2*(r()<.5?210:130)]);}
  }
  var s=p.map(function(q){return [610+q[0]/2.306,440+q[1]/2.613];});
  line('g6',s,'#00f',2.600);
  var d='';s.forEach(function(q){var x=q[0].toFixed(1),y=q[1].toFixed(1);d+='M'+x+' '+(q[1]-4.5).toFixed(1)+'v9M'+(q[0]-4.5).toFixed(1)+' '+y+'h9M'+(q[0]-3.2).toFixed(1)+' '+(q[1]-3.2).toFixed(1)+'l6.4 6.4M'+(q[0]+3.2).toFixed(1)+' '+(q[1]-3.2).toFixed(1)+'l-6.4 6.4';});
  add('g6','path',{d:d,stroke:'#00f','stroke-width':2.6,fill:'none'});
  frame('g6',702.4,1244.4,585.4,1012.9,xs,ys,true);
})();

/* Regression */
(function(){
  var xs=[1391.5,1448.4,1505,1561.5,1618.5,1674.6,1731.6,1788.6],ys=[608,664.5,721.3,778.5,834.3,891.5,947.2,1004.4];
  bg('gr',1369.5,1853.6,599,1100);
  var z=[[1355,365],[1295,385],[1384,398],[1193,465],[1262,452],[1263,451],[1229,502],[1338,527],[1372,522],[1099,573],[1268,570],[1263,662],[969,739],[1046,743],[1033,747],[1022,767],[1012,774],[980,781],[965,808],[961,820],[1001,817],[1131,771],[759,828],[1034,848],[1035,853],[884,850],[846,877],[855,900],[904,895],[883,905],[914,905],[952,909],[935,921],[822,920],[778,929],[830,943],[868,935],[862,940],[905,943],[924,947],[948,954],[752,975],[780,962],[835,965],[911,980],[756,990],[780,998],[805,1004],[860,1005],[925,1018],[760,1010],[741,1016],[884,1035],[842,1033],[836,1058],[770,1047],[708,1056],[684,1065],[631,1072],[639,1098],[690,1078],[680,1085],[730,1076],[733,1090],[752,1065],[793,1074],[802,1108],[795,1120],[800,1213],[772,1205],[782,1218],[749,1216],[764,1158],[514,1135],[545,1216],[528,1230],[451,1263],[466,1282],[445,1293],[389,1382],[295,1416],[333,1432],[320,1447],[405,1436],[390,1465],[465,1470],[615,1479],[741,1364],[682,1294],[696,1270],[607,1367],[448,1384],[445,1407],[499,1455],[532,1413],[503,1413],[338,1515],[365,1492],[449,1530],[430,1515],[393,1520],[478,1310],[490,1312],[460,1352],[476,1355],[490,1352],[470,1440],[485,1438],[505,1430],[424,1470],[435,1480],[445,1497],[355,1525],[372,1530],[252,1550]];
  var r=rng(99);
  function g(){return r()+r()+r()+r()-2;}
  for(var i=0;i<165;i++){
    var x=620+g()*140;x=Math.max(440,Math.min(800,x));
    var y=372+(1410-x)*1.0916+g()*75;
    z.push([x,y]);
  }
  var d='';z.forEach(function(p){var x=1280+p[0]/2.458,y=465+p[1]/2.727;d+='M'+(x-5).toFixed(1)+' '+y.toFixed(1)+'a5 5 0 1 0 10 0a5 5 0 1 0-10 0';});
  add('gr','path',{d:d,fill:'none',stroke:'#000','stroke-width':1});
  add('gr','path',{d:'M1410 1040L1853.600 600',stroke:'#333','stroke-width':1,'stroke-dasharray':'1.5 1.5'});
  add('gr','path',{d:'M1418.300 1030L1853.600 601.400',stroke:'#00f','stroke-width':3.4});
  frame('gr',1369.5,1853.6,599,1100,xs,ys);
})();
</script>
</body>
</html>
